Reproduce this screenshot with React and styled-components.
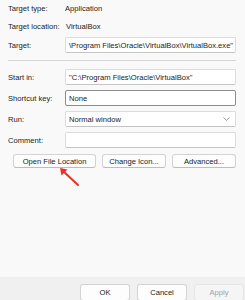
import React from 'react';
import styled, { createGlobalStyle } from 'styled-components';

const GlobalStyle = createGlobalStyle`
  html, body {
    margin: 0;
    padding: 0;
    background: #f9f9f9;
  }
  body {
    font-family: 'Liberation Sans', Arial, sans-serif;
    font-size: 7.6px;
    color: #1b1b1b;
  }
`;

const Dialog = styled.div`
  width: 245px;
  height: 300px;
  display: flex;
  flex-direction: column;
  overflow: hidden;
  background: #f9f9f9;
`;

const Body = styled.div`
  position: relative;
  flex: 1;
  padding: 0 9px 0 8px;
  display: flex;
  flex-direction: column;
`;

const InfoRow = styled.div`
  display: flex;
  align-items: center;
  height: ${p => p.h}px;
`;

const Label = styled.div`
  width: 57px;
  flex-shrink: 0;
  white-space: nowrap;
`;

const Value = styled.div`
  white-space: nowrap;
  margin-left: ${p => p.shift || 0}px;
`;

const FieldRow = styled.div`
  display: flex;
  align-items: center;
  margin-top: ${p => p.mt}px;
  height: 16px;
`;

const Field = styled.div`
  flex: 1;
  height: 16px;
  box-sizing: border-box;
  background: #ffffff;
  border: 1px solid ${p => (p.focus ? '#8c8c8c' : '#dcdcdc')};
  border-bottom-color: ${p => (p.focus ? '#8c8c8c' : '#c4c4c4')};
  border-radius: 2px;
  display: flex;
  align-items: center;
  justify-content: space-between;
  padding: 0 5px 0 3px;
  white-space: nowrap;
  overflow: hidden;
`;

const Separator = styled.div`
  height: 1px;
  background: #d6d6d6;
  margin-top: 7px;
`;

const ButtonRow = styled.div`
  display: flex;
  gap: 6px;
  margin-top: 6px;
  padding-left: 5px;
`;

const Button = styled.div`
  width: ${p => p.w}px;
  height: ${p => p.h || 14}px;
  box-sizing: border-box;
  background: ${p => (p.disabled ? '#f5f5f5' : '#fdfdfd')};
  color: ${p => (p.disabled ? '#a2a2a2' : '#1b1b1b')};
  border: 1px solid ${p => (p.disabled ? '#e6e6e6' : '#d3d3d3')};
  border-bottom-color: ${p => (p.disabled ? '#e6e6e6' : '#bdbdbd')};
  border-radius: 3px;
  display: flex;
  align-items: center;
  justify-content: center;
  white-space: nowrap;
`;

const Arrow = styled.svg`
  position: absolute;
  left: 56px;
  top: 164px;
`;

const Footer = styled.div`
  height: 23px;
  background: #f0f0f0;
  display: flex;
  justify-content: flex-end;
  gap: 7px;
  padding: 7px 1px 0 0;
  box-sizing: border-box;
`;

const Chevron = () => (
  <svg width="7" height="4" viewBox="0 0 7 4">
    <path d="M0.5 0.5 L3.5 3.3 L6.5 0.5" fill="none" stroke="#7a7a7a" strokeWidth="0.8" />
  </svg>
);

const App = () => (
  <Dialog>
    <GlobalStyle />
    <Body>
      <InfoRow h={17}>
        <Label>Target type:</Label>
        <Value>Application</Value>
      </InfoRow>
      <InfoRow h={18}>
        <Label>Target location:</Label>
        <Value shift={1}>VirtualBox</Value>
      </InfoRow>
      <FieldRow mt={2}>
        <Label>Target:</Label>
        <Field>\Program Files\Oracle\VirtualBox\VirtualBox.exe"</Field>
      </FieldRow>
      <Separator />
      <FieldRow mt={8}>
        <Label>Start in:</Label>
        <Field>"C:\Program Files\Oracle\VirtualBox"</Field>
      </FieldRow>
      <FieldRow mt={5}>
        <Label>Shortcut key:</Label>
        <Field focus>None</Field>
      </FieldRow>
      <FieldRow mt={5}>
        <Label>Run:</Label>
        <Field>
          Normal window
          <Chevron />
        </Field>
      </FieldRow>
      <FieldRow mt={5}>
        <Label>Comment:</Label>
        <Field />
      </FieldRow>
      <ButtonRow>
        <Button w={83}>Open File Location</Button>
        <Button w={64}>Change Icon...</Button>
        <Button w={64}>Advanced...</Button>
      </ButtonRow>
      <Arrow width="26" height="26" viewBox="0 0 26 26">
        <line x1="22" y1="21" x2="7" y2="7" stroke="#e5322b" strokeWidth="2" strokeLinecap="round" />
        <path d="M4 4 L11.5 5.5 L5.5 11.5 Z" fill="#e5322b" />
      </Arrow>
    </Body>
    <Footer>
      <Button w={50} h={17}>OK</Button>
      <Button w={50} h={17}>Cancel</Button>
      <Button w={50} h={17} disabled>Apply</Button>
    </Footer>
  </Dialog>
);

export default App;
